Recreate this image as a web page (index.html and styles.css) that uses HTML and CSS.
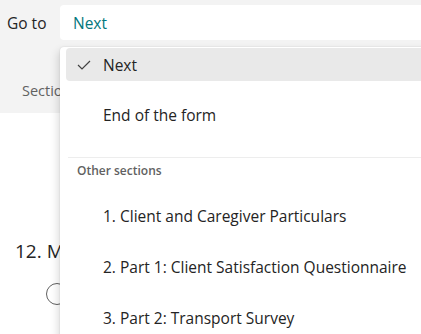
FILE: index.html
```html
<!DOCTYPE html>
<html lang="en">
<head>
    <meta charset="UTF-8">
    <title>Go to section</title>
    <link rel="stylesheet" href="styles.css">
</head>
<body>

<div class="page">
    <div class="branch-bar">
        <div class="goto-row">
            <span class="goto-label">Go to</span>
            <div class="goto-select">Next</div>
        </div>
        <div class="section-hint">Section 2</div>
    </div>

    <div class="question">
        <p class="question-title">12. Mobility</p>
        <div class="radio"></div>
    </div>

    <!-- menu aberto por cima do conteudo -->
    <div class="dropdown">
        <div class="option selected">
            <svg class="check" width="14" height="10" viewBox="0 0 14 10">
                <path d="M1 5 L5 9 L13 1" fill="none" stroke="#424242" stroke-width="1.2"/>
            </svg>
            <span>Next</span>
        </div>
        <div class="option"><span>End of the form</span></div>

        <div class="divider"></div>
        <div class="group-title">Other sections</div>

        <div class="section-list">
            <div class="option"><span>1. Client and Caregiver Particulars</span></div>
            <div class="option"><span>2. Part 1: Client Satisfaction Questionnaire</span></div>
            <div class="option"><span>3. Part 2: Transport Survey</span></div>
        </div>
    </div>
</div>

</body>
</html>
```
FILE: styles.css
```css
* {
    margin: 0;
    padding: 0;
    box-sizing: border-box;
    font-family: "Open Sans", sans-serif;
}

body {
    background: #ffffff;
    overflow: hidden;
}

.page {
    position: relative;
    width: 421px;
    height: 334px;
    overflow: hidden;
}

.branch-bar {
    background: #f3f3f3;
    height: 113px;
    padding-top: 5px;
}

.goto-row {
    display: flex;
    align-items: center;
    height: 35px;
}

.goto-label {
    width: 60px;
    padding-left: 7px;
    font-size: 15.5px;
    color: #242424;
}

.goto-select {
    flex: 1;
    height: 35px;
    background: #ffffff;
    border-radius: 4px 0 0 4px;
    padding-left: 13px;
    display: flex;
    align-items: center;
    font-size: 15.5px;
    color: #03787c;
}

.section-hint {
    margin-top: 41px;
    padding-left: 22px;
    font-size: 14.5px;
    color: #616161;
}

.question {
    padding: 126px 0 0 15px;
}

.question-title {
    font-size: 19px;
    color: #242424;
    line-height: 24px;
}

.radio {
    width: 22px;
    height: 22px;
    margin: 20px 0 0 31px;
    border: 1px solid #616161;
    border-radius: 50%;
}

.dropdown {
    position: absolute;
    left: 60px;
    top: 47px;
    right: -10px;
    bottom: -40px;
    background: #ffffff;
    border-radius: 4px 0 0 0;
    box-shadow: 0 0 2px rgba(0, 0, 0, 0.12), -2px 4px 8px rgba(0, 0, 0, 0.14);
    padding: 1px 0 0 6px;
}

.option {
    height: 33px;
    display: flex;
    align-items: center;
    padding-left: 37px;
    font-size: 15.5px;
    color: #242424;
    border-radius: 4px 0 0 4px;
    white-space: nowrap;
    position: relative;
    margin-bottom: 17px;
}

.option.selected {
    background: #e9e9e9;
}

.check {
    position: absolute;
    left: 11px;
    top: 12px;
}

.divider {
    height: 1px;
    background: #ededed;
    margin: 26px 0 0 2px;
}

.group-title {
    font-size: 12px;
    font-weight: 600;
    color: #616161;
    line-height: 16px;
    padding-left: 11px;
    margin-top: 5px;
}

.section-list {
    margin-top: 20px;
}

.section-list .option {
    margin-bottom: 18px;
}
```
